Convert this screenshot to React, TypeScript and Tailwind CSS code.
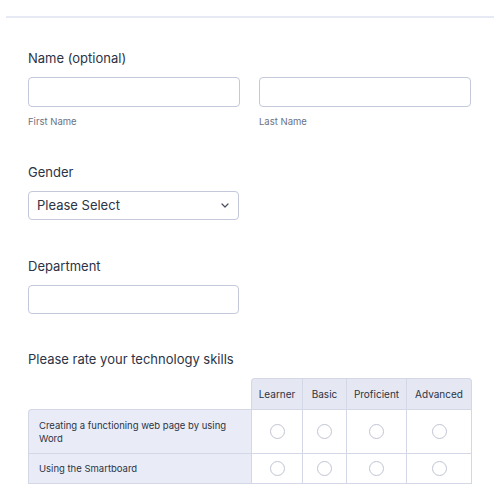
import React from "react";

const font = { fontFamily: "Inter, 'Noto Sans', sans-serif" };

function Label({ children }: { children: React.ReactNode }) {
  return <div className="text-[13px] leading-4 font-normal text-[#2c3345]">{children}</div>;
}

function Radio() {
  return <span className="block w-[15px] h-[15px] rounded-full border border-[#c1c5d3] bg-white" />;
}

const columns = ["Learner", "Basic", "Proficient", "Advanced"];
const rows = [
  { label: "Creating a functioning web page by using Word", h: "h-[44px]" },
  { label: "Using the Smartboard", h: "h-[30px]" },
  { label: "", h: "h-[30px]" },
];

export default function App() {
  return (
    <div className="w-[500px] h-[484px] overflow-hidden bg-white" style={font}>
      <div className="mx-[6px] h-[18px] border-b-2 border-[#e7e9f5]" />

      <div className="px-[28px]">
        {/* Name */}
        <div className="pt-[32px]">
          <Label>Name (optional)</Label>
          <div className="mt-[11px] flex gap-[19px]">
            <div className="w-[212px]">
              <div className="h-[30px] rounded-[4px] border border-[#c3c8da] bg-white" />
              <div className="mt-[9px] text-[9.5px] leading-3 text-[#6b7185]">First Name</div>
            </div>
            <div className="w-[212px]">
              <div className="h-[30px] rounded-[4px] border border-[#c3c8da] bg-white" />
              <div className="mt-[9px] text-[9.5px] leading-3 text-[#6b7185]">Last Name</div>
            </div>
          </div>
        </div>

        {/* Gender */}
        <div className="pt-[36px]">
          <Label>Gender</Label>
          <div className="mt-[11px] w-[211px] h-[29px] rounded-[4px] border border-[#c3c8da] flex items-center justify-between pl-[8px] pr-[9px]">
            <span className="text-[13px] text-[#2c3345]">Please Select</span>
            <svg width="8" height="5" viewBox="0 0 8 5" fill="none">
              <path d="M1 1l3 3 3-3" stroke="#4a4f5e" strokeWidth="1.2" strokeLinecap="round" strokeLinejoin="round" />
            </svg>
          </div>
        </div>

        {/* Department */}
        <div className="pt-[38px]">
          <Label>Department</Label>
          <div className="mt-[11px] w-[211px] h-[29px] rounded-[4px] border border-[#c3c8da] bg-white" />
        </div>

        {/* Rating */}
        <div className="pt-[37px]">
          <Label>Please rate your technology skills</Label>
          <div className="mt-[11px] grid grid-cols-[223px_52px_44px_60px_65px]">
            <div />
            {columns.map((c, i) => (
              <div
                key={c}
                className={`h-[31px] flex items-center justify-center bg-[#e5e8f3] border-t border-r border-[#d3d7e6] text-[10px] text-[#2c3345] ${
                  i === 0 ? "border-l rounded-tl-[4px]" : ""
                } ${i === columns.length - 1 ? "rounded-tr-[4px]" : ""}`}
              >
                {c}
              </div>
            ))}
            {rows.map((r, ri) => (
              <React.Fragment key={ri}>
                <div
                  className={`${r.h} flex items-center pl-[10px] pr-[12px] bg-[#e9ecf6] border-l border-t border-[#d3d7e6] text-[9.5px] leading-[13px] text-[#2c3345] ${
                    ri === 0 ? "rounded-tl-[4px]" : ""
                  }`}
                >
                  <span>{r.label}</span>
                </div>
                {columns.map((c, ci) => (
                  <div
                    key={c}
                    className={`${r.h} flex items-center justify-center bg-white border-t border-r border-[#d3d7e6] ${
                      ci === 0 ? "border-l" : ""
                    }`}
                  >
                    <Radio />
                  </div>
                ))}
              </React.Fragment>
            ))}
          </div>
        </div>
      </div>
    </div>
  );
}
